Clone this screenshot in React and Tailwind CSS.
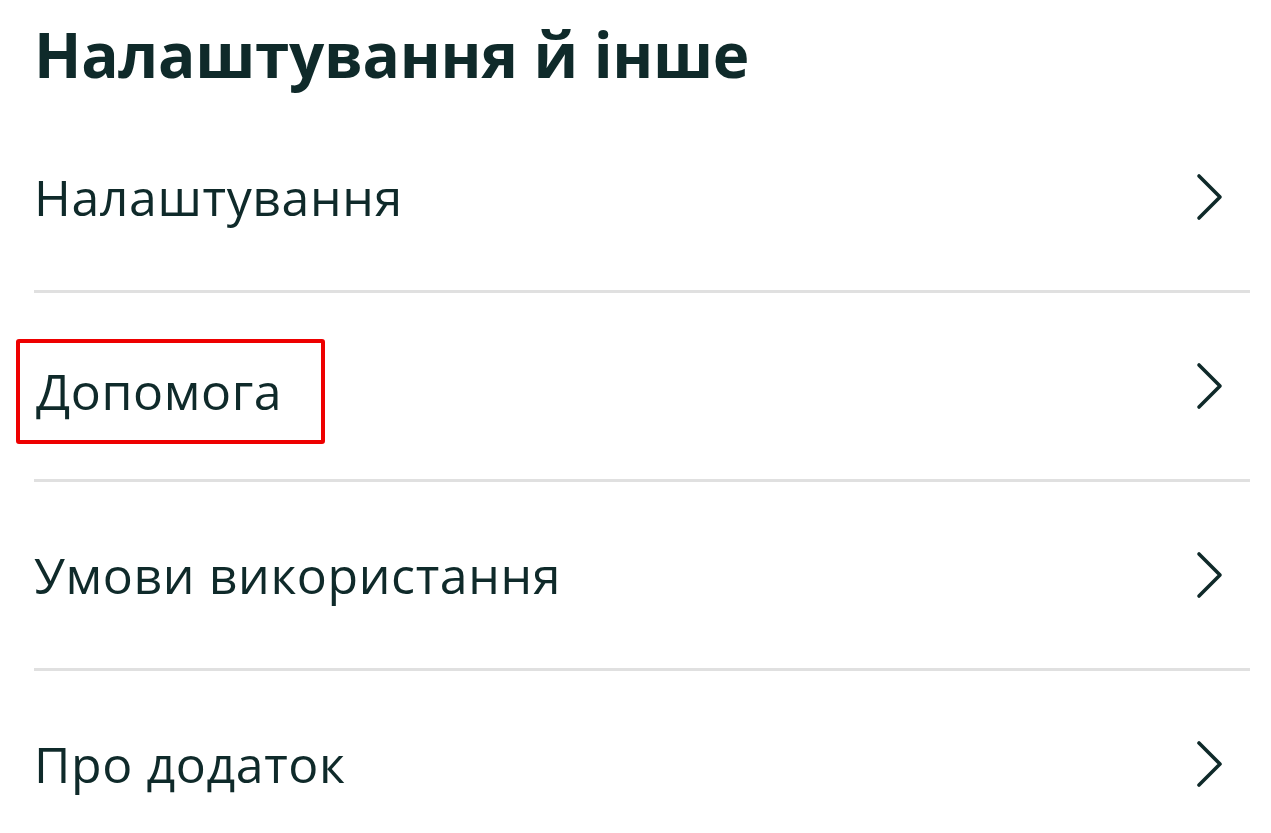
import React from "react";

const items = ["Налаштування", "Допомога", "Умови використання", "Про додаток"];

function Chevron() {
  return (
    <svg width="30" height="48" viewBox="0 0 30 48" fill="none" className="shrink-0">
      <path
        d="M4 3 L25 24 L4 45"
        stroke="#0f2a2a"
        strokeWidth="3.6"
        strokeLinecap="round"
        strokeLinejoin="round"
      />
    </svg>
  );
}

export default function App() {
  return (
    <div
      className="w-[1271px] h-[833px] bg-white overflow-hidden text-[#0f2a2a]"
      style={{ fontFamily: '"Open Sans", "Noto Sans", sans-serif' }}
    >
      {/* heading */}
      <div className="h-[104px] pl-[34px] pt-[23px]">
        <h1 className="text-[62px] font-bold leading-none tracking-[-0.3px]">
          Налаштування й інше
        </h1>
      </div>

      {/* list */}
      <div className="pl-[34px] pr-[21px]">
        {items.map((label, i) => (
          <div key={label}>
            <div className="h-[186px] flex items-center justify-between pr-[25px]">
              {i === 1 ? (
                <div className="-ml-[18px] mt-[10px] pl-[16px] w-[309px] h-[105px] flex items-center border-4 border-[#ee0000] rounded-[3px]">
                  <span className="text-[50px] leading-none tracking-[0.6px]">{label}</span>
                </div>
              ) : (
                <span className="text-[50px] leading-none tracking-[0.6px]">{label}</span>
              )}
              <Chevron />
            </div>
            {i < items.length - 1 && <div className="h-[3px] bg-[#e0e0e0]" />}
          </div>
        ))}
      </div>
    </div>
  );
}
